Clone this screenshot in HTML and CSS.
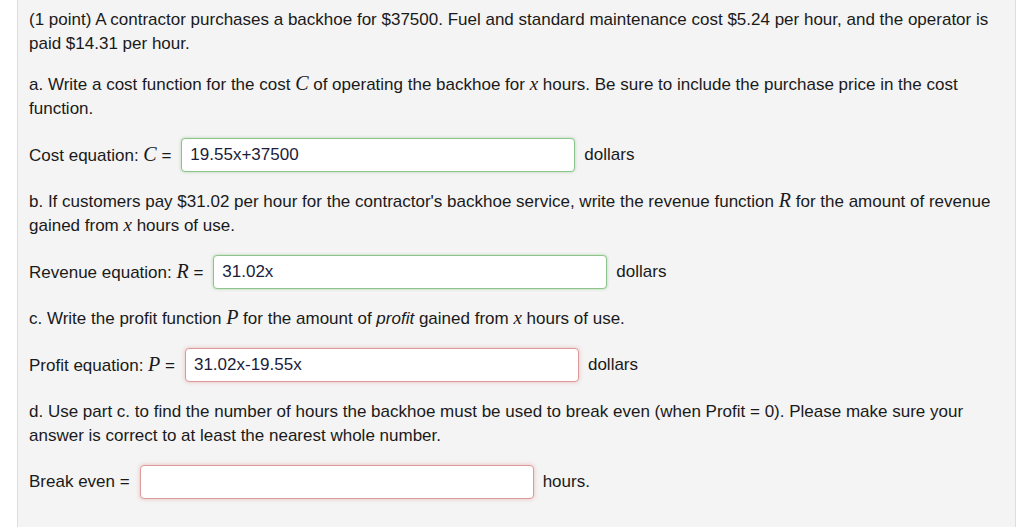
FILE: index.html
```html
<!DOCTYPE html>
<html>
<head>
  <meta charset="UTF-8">
  <title>Backhoe Problem</title>
  <link rel="stylesheet" href="styles.css">
</head>
<body>
  <div class="problem">
    <p>(1 point) A contractor purchases a backhoe for $37500. Fuel and standard maintenance cost $5.24 per hour, and the operator is paid $14.31 per hour.</p>

    <p>a. Write a cost function for the cost <span class="math">C</span> of operating the backhoe for <span class="math var">x</span> hours. Be sure to include the purchase price in the cost function.</p>

    <div class="answer-row">
      <span>Cost equation: <span class="math">C</span> =</span>
      <input type="text" class="answer correct" value="19.55x+37500">
      <span>dollars</span>
    </div>

    <p>b. If customers pay $31.02 per hour for the contractor's backhoe service, write the revenue function <span class="math">R</span> for the amount of revenue gained from <span class="math var">x</span> hours of use.</p>

    <div class="answer-row">
      <span>Revenue equation: <span class="math">R</span> =</span>
      <input type="text" class="answer correct" value="31.02x">
      <span>dollars</span>
    </div>

    <p>c. Write the profit function <span class="math">P</span> for the amount of <em>profit</em> gained from <span class="math var">x</span> hours of use.</p>

    <div class="answer-row">
      <span>Profit equation: <span class="math">P</span> =</span>
      <input type="text" class="answer incorrect" value="31.02x-19.55x">
      <span>dollars</span>
    </div>

    <p>d. Use part c. to find the number of hours the backhoe must be used to break even (when Profit = 0). Please make sure your answer is correct to at least the nearest whole number.</p>

    <div class="answer-row">
      <span>Break even =</span>
      <input type="text" class="answer incorrect" value="">
      <span>hours.</span>
    </div>
  </div>
</body>
</html>
```

FILE: styles.css
```css
body {
  margin: 0;
  background: #fff;
  font-family: "Liberation Sans", Arial, sans-serif;
  font-size: 17px;
  color: #1a1a1a;
}

.problem {
  margin-left: 17px;
  width: 999px;
  min-height: 527px;
  box-sizing: border-box;
  background: #f4f4f4;
  border-left: 1px solid #dedede;
  border-right: 1px solid #dedede;
  padding: 8px 12px 0 11px;
}

.problem p {
  margin: 0 0 17px;
  line-height: 24px;
}

.math {
  font-family: "Liberation Serif", "Times New Roman", serif;
  font-style: italic;
  font-size: 20px;
  line-height: 1;
}

.math.var {
  font-size: 19px;
}

.answer-row {
  display: flex;
  align-items: center;
  margin-bottom: 18px;
  height: 34px;
}

.answer {
  width: 394px;
  height: 34px;
  box-sizing: border-box;
  margin: 0 9px 0 10px;
  padding: 4px 8px;
  font-family: "Liberation Sans", Arial, sans-serif;
  font-size: 17px;
  color: #1c1c3a;
  background: #fff;
  border-radius: 4px;
  outline: none;
}

.answer.correct {
  border: 1px solid #8cc48c;
  box-shadow: 0 0 3px rgba(100, 180, 100, 0.5);
}

.answer.incorrect {
  border: 1px solid #dc9a9a;
  box-shadow: 0 0 4px rgba(220, 120, 120, 0.45);
}
```
